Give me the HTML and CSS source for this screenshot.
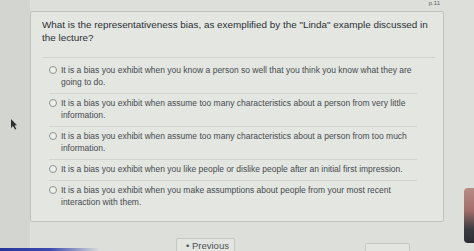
FILE: index.html
```html
<!DOCTYPE html>
<html>
<head>
<meta charset="utf-8">
<link rel="stylesheet" href="styles.css">
</head>
<body>
<div class="screen">
  <div class="sidebar">
    <svg class="cursor" width="8" height="11" viewBox="0 0 8 11"><path d="M1 0 L1 9 L3 7 L5 10.5 L6.3 9.8 L4.4 6.6 L7 6.3 Z" fill="#2c2f2f"/></svg>
  </div>
  <div class="main">
    <div class="page-num">p.11</div>
    <div class="card">
      <div class="question">What is the representativeness bias, as exemplified by the "Linda" example discussed in the lecture?</div>
      <div class="options">
        <label class="option"><span class="radio"></span><span class="otext">It is a bias you exhibit when you know a person so well that you think you know what they are going to do.</span></label>
        <label class="option"><span class="radio"></span><span class="otext">It is a bias you exhibit when assume too many characteristics about a person from very little information.</span></label>
        <label class="option"><span class="radio"></span><span class="otext">It is a bias you exhibit when assume too many characteristics about a person from too much information.</span></label>
        <label class="option"><span class="radio"></span><span class="otext">It is a bias you exhibit when you like people or dislike people after an initial first impression.</span></label>
        <label class="option last"><span class="radio"></span><span class="otext">It is a bias you exhibit when you make assumptions about people from your most recent interaction with them.</span></label>
      </div>
    </div>
    <div class="nav">
      <button class="btn prev">&bull; Previous</button>
      <button class="btn next"></button>
    </div>
  </div>
  <div class="edge"></div>
  <div class="taskbar"></div>
</div>
</body>
</html>
```
FILE: styles.css
```css
* { box-sizing: border-box; }
html, body { margin: 0; padding: 0; }
body {
  width: 474px;
  height: 251px;
  overflow: hidden;
  background: #dfe2dc;
  font-family: "Liberation Sans", Arial, sans-serif;
}
.screen {
  position: relative;
  display: flex;
  width: 474px;
  height: 251px;
  background: #dde0da;
}
.sidebar {
  width: 30px;
  flex: none;
  background: #d3d6d0;
  padding: 119px 0 0 10px;
}
.cursor { display: block; }
.main {
  flex: 1;
  display: flex;
  flex-direction: column;
  padding: 0 30px 0 0;
}
.page-num {
  flex: none;
  height: 11px;
  font-size: 6px;
  color: #5a5d5f;
  text-align: right;
  padding-right: 4px;
  line-height: 6px;
}
.card {
  flex: none;
  height: 211px;
  background: #e3e6e1;
  border: 1px solid #bfc2bd;
  border-radius: 2px;
  padding: 6px 8px 0 11px;
}
.question {
  font-size: 9.9px;
  line-height: 13px;
  color: #2c3036;
  padding: 0;
  height: 40px;
  border-bottom: 1px solid #d0d3ce;
}
.options {
  padding: 4px 18px 0 7px;
}
.option {
  display: flex;
  gap: 3px;
  align-items: flex-start;
  border-bottom: 1px solid #d2d5d0;
  padding: 2px 0 5px 0;
  margin-bottom: 1px;
  font-size: 8.5px;
  line-height: 12px;
  color: #474b4f;
}
.option.last { border-bottom: none; }
.radio {
  flex: none;
  width: 8px;
  height: 8px;
  margin-top: 2px;
  border: 1px solid #8d9192;
  border-radius: 50%;
  background: #eef0ec;
}
.otext { padding-left: 1px; }
.nav {
  flex: none;
  display: flex;
  justify-content: space-between;
  align-items: flex-start;
  padding: 16px 34px 0 146px;
}
.btn {
  height: 16px;
  background: #e2e5e0;
  border: 1px solid #c4c7c2;
  border-radius: 2px;
  font-family: inherit;
  font-size: 9.5px;
  color: #4e5256;
  padding: 0 0 0 9px;
  line-height: 14px;
  white-space: nowrap;
  text-align: left;
}
.prev { width: 59px; }
.next { width: 45px; margin-top: 5px; }
.edge {
  position: absolute;
  right: 0;
  top: 188px;
  width: 10px;
  height: 55px;
  background: linear-gradient(180deg, #b88c86 0%, #a36f6c 40%, #3a3b40 75%, #2c2d33 100%);
  border-radius: 4px 0 0 4px;
}
.taskbar {
  position: absolute;
  left: 0;
  bottom: 0;
  width: 100px;
  height: 3px;
  background: linear-gradient(90deg, #26359a 0%, #3e4cb0 50%, rgba(200,205,225,0) 100%);
}
```
